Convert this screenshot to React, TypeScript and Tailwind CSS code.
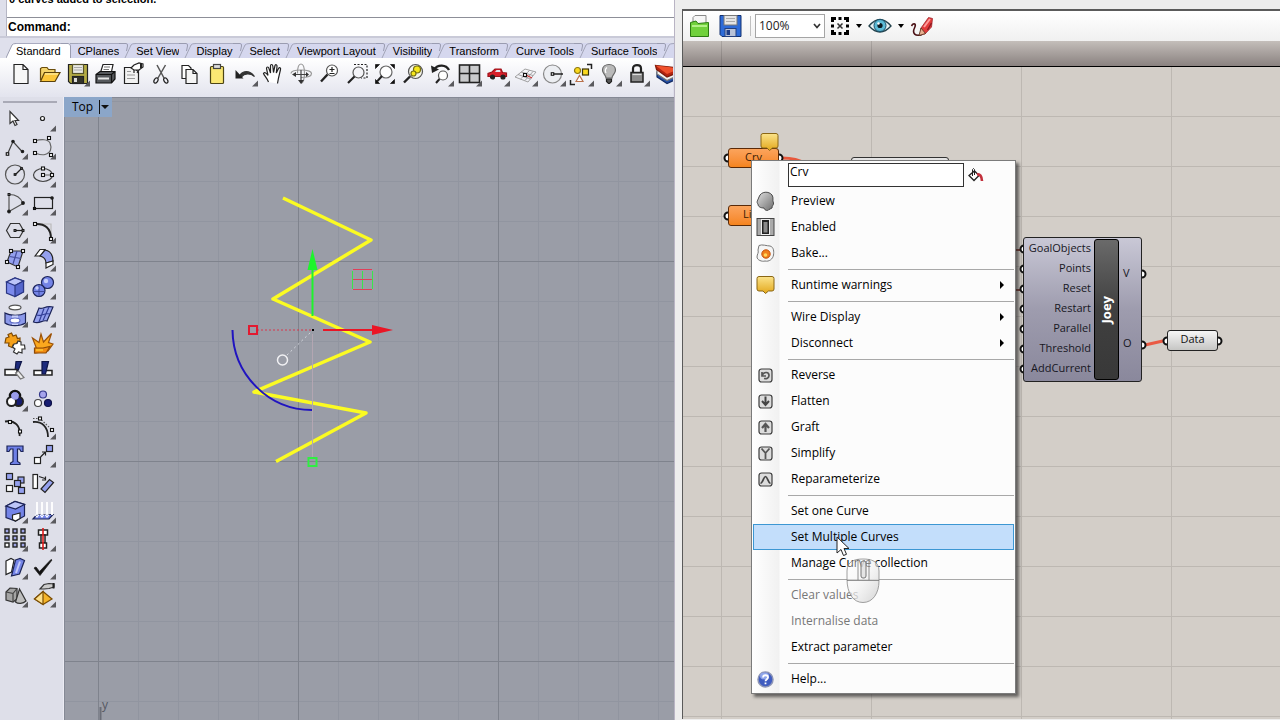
import React from "react";

type Glyph = { name: string; art: React.ReactNode; more?: boolean };

const sq = (x: number, y: number, s = 3) => (
  <rect x={x - s / 2} y={y - s / 2} width={s} height={s} fill="#fff" stroke="#111" strokeWidth="1.1" />
);

function Cell({ glyph }: { glyph: Glyph }) {
  return (
    <button type="button" aria-label={glyph.name} className="size-7 shrink-0">
      <svg viewBox="0 0 28 28" className="size-7" fill="none" stroke="#222" strokeWidth="1.2">
        {glyph.art}
        {glyph.more && <path d="M27 20.5V26.5H21Z" fill="#5a5a5e" stroke="none" />}
      </svg>
    </button>
  );
}

const toolbar: Glyph[] = [
  { name: "New", art: <path d="M7 4.500H16L21 9.500V23.500H7Z M16 4.500V9.500H21" fill="#f7f7f7" /> },
  {
    name: "Open",
    art: (
      <>
        <path d="M5.500 20V8.500L7 7.500H12L13.500 9.500H20V13" fill="#f3d36a" stroke="#6a4d0c" />
        <path d="M5.500 21.500L9.500 12.500H25L20 21.500Z" fill="#fbc63a" stroke="#5a420c" />
        <path d="M10 14H23" stroke="#fff0a8" />
      </>
    ),
  },
  {
    name: "Save",
    more: true,
    art: (
      <>
        <path d="M5.500 4.500H24.500V23.500H7.500L5.500 21.500Z" fill="#b5ac45" />
        <rect x="9.500" y="4.500" width="11" height="9" fill="#e9e9e4" stroke="#57542a" />
        <path d="M11 7.500H19M11 10H19" stroke="#aaa" />
        <rect x="9.500" y="16.500" width="11" height="7" fill="#33332a" />
        <rect x="11" y="18" width="3" height="4" fill="#ddd" stroke="none" />
      </>
    ),
  },
  {
    name: "Print",
    art: (
      <>
        <path d="M9 14L12 4.500H22L20 14Z" fill="#fff" />
        <path d="M13 7H19M12.500 9.500H18" stroke="#777" />
        <path d="M5 14.500L9 11.500H24V19L20.500 23H5Z" fill="#55585c" stroke="#111" />
        <path d="M5 14.500H20.500L24 11.500M20.500 14.500V23" stroke="#111" />
        <path d="M7 18.500H18" stroke="#e8e8e8" strokeWidth="2" />
      </>
    ),
  },
  {
    name: "Document properties",
    art: (
      <>
        <path d="M5.500 7.500H15L19.500 12V23.500H5.500Z" fill="#f2f2f2" />
        <path d="M8 11.500H12M8 15H16M8 18.500H16" stroke="#999" />
        <path d="M12 8L15 5L20 3L24 4V7L20 10L15 10Z" fill="#fff" />
        <path d="M15 10V13M20 10L18 13" />
        <path d="M22 3V8" strokeWidth="2" />
      </>
    ),
  },
  {
    name: "Cut",
    art: (
      <>
        <path d="M10 5L17 18M18.500 5L11 18" stroke="#555" strokeWidth="1.500" />
        <ellipse cx="9" cy="20.500" rx="1.800" ry="2.800" transform="rotate(30 9 20.500)" />
        <ellipse cx="18.800" cy="20.500" rx="1.800" ry="2.800" transform="rotate(-30 18.800 20.500)" />
      </>
    ),
  },
  {
    name: "Copy",
    art: (
      <>
        <path d="M7 5.500H13.500L16 8V18.500H7Z" fill="#fff" />
        <path d="M11 9.500H18L22 13.500V23.500H11Z M18 9.500V13.500H22" fill="#f5f5f5" />
      </>
    ),
  },
  {
    name: "Paste",
    art: (
      <>
        <rect x="7.500" y="6.500" width="13" height="17" rx="1" fill="#fbe873" stroke="#4d4515" />
        <rect x="10.500" y="4.500" width="7" height="4" fill="#ddd" stroke="#444" />
      </>
    ),
  },
  {
    name: "Undo",
    more: true,
    art: (
      <>
        <path d="M9 15C12 11 18 9.500 23.500 16.500C19 12.500 13 13.500 10.500 17Z" fill="#333" stroke="#333" />
        <path d="M4.500 10V18.500H12.500Z" fill="#222" stroke="none" />
      </>
    ),
  },
  {
    name: "Pan",
    art: (
      <path
        d="M9.500 22C8 18 5.500 16 4.500 13.500C5 12 7 12.500 9 15.500L7.500 8.500C7.500 6.500 9.500 6.500 10 8.500L11.500 13L11.500 6C11.500 4 13.500 4 13.800 6L14.500 12.500L16 5.500C16.500 4 18.300 4.500 18 6.500L17.300 13L19.500 8.500C20.500 7 22 8 21.500 9.500L19.500 18L18.500 23.500"
        fill="#fff"
      />
    ),
  },
  {
    name: "Rotate view",
    art: (
      <>
        <path d="M14 4C16 4 17.500 8 17.500 13.500S16 23.500 14 23.500" stroke="#999" />
        <path d="M14 4C12 4 10.500 8 10.500 13.500" stroke="#999" />
        <path d="M4 13.500C4 11 8 10 14 10S24.500 11 24.500 13.500S20 17.500 14 17.500" stroke="#999" />
        <path d="M14 10V20M9 14.500H19" stroke="#444" />
        <path d="M11 20H17L14 24Z M9 12V17L5 14.500Z M19 12V17L22 14.500Z" fill="#333" stroke="none" />
      </>
    ),
  },
  {
    name: "Zoom dynamic",
    art: (
      <>
        <circle cx="17" cy="10.500" r="5.500" fill="#fff" stroke="#555" />
        <path d="M12.500 14.500L6 21.500" strokeWidth="2.400" />
        <path d="M14.500 9.500H19.500M17 7V12M14.500 13.500H19.500" />
      </>
    ),
  },
  {
    name: "Zoom window",
    art: (
      <>
        <path d="M11 4.500H24V18H18" strokeDasharray="2 1.500" />
        <circle cx="15.500" cy="12.500" r="5.500" fill="#f4f4f8" stroke="#555" />
        <path d="M11.500 16.500L5 23" strokeWidth="2.200" />
      </>
    ),
  },
  {
    name: "Zoom extents",
    art: (
      <>
        <path d="M4.500 8.500V4.500H8.500Z M19.500 4.500H23.500V8.500Z M23.500 19.500V23.500H19.500Z M8.500 23.500H4.500V19.500Z" fill="#111" strokeWidth="0.800" />
        <circle cx="15" cy="12" r="6" fill="#fff" stroke="#666" />
        <path d="M11 16L6 21.500" strokeWidth="2" />
      </>
    ),
  },
  {
    name: "Zoom selected",
    art: (
      <>
        <circle cx="16.500" cy="11.500" r="7" fill="#f4f4e8" stroke="#555" />
        <circle cx="18" cy="9.500" r="3.500" fill="#f6e71c" stroke="#77700e" />
        <circle cx="14.500" cy="13.500" r="2.500" fill="#f6e71c" stroke="#77700e" />
        <path d="M11 16.500L5 22.500" strokeWidth="2.400" />
      </>
    ),
  },
  {
    name: "Undo view",
    more: true,
    art: (
      <>
        <path d="M7 9.500C11 4 19 4.500 22 10" strokeWidth="2.400" />
        <path d="M4 5.500L5 13L12 9.500Z" fill="#222" stroke="none" />
        <circle cx="16" cy="15.500" r="4.500" fill="#fff" stroke="#555" />
        <path d="M12.500 19L9 23" strokeWidth="2" />
      </>
    ),
  },
  {
    name: "Four viewports",
    more: true,
    art: (
      <>
        <rect x="4.500" y="5" width="20" height="17.500" fill="#c9cacc" strokeWidth="1.600" />
        <path d="M14.500 5V22.500M4.500 13.500H24.500" strokeWidth="1.600" />
      </>
    ),
  },
  {
    name: "Named view",
    more: true,
    art: (
      <>
        <path d="M5 16V13.500L9 12L12 9H18L19.500 12.500L23.500 13V16.500H5Z" fill="#d8202b" stroke="#9c1219" />
        <path d="M12 12L13.500 10H17L17.500 12Z" fill="#dfe6ee" stroke="none" />
        <circle cx="9.500" cy="17" r="2" fill="#222" />
        <circle cx="20" cy="17" r="2" fill="#222" />
      </>
    ),
  },
  {
    name: "Construction plane",
    more: true,
    art: (
      <>
        <path
          d="M4 17L14 9L25 12L17 22Z M7 14.500L19.500 19M10 12L22 15.500M9.500 19L18.500 10.500M14 20.500L22 11.500"
          stroke="#999"
          strokeWidth="0.900"
        />
        <path d="M15 15L21 18" stroke="#c33" />
        {sq(14, 15)}
      </>
    ),
  },
  {
    name: "Set object display",
    more: true,
    art: (
      <>
        <circle cx="13.500" cy="14" r="9" fill="#eceef2" stroke="#888" />
        <path d="M13.500 14H24" strokeWidth="1.500" />
        {sq(13.5, 14, 2.5)}
      </>
    ),
  },
  {
    name: "Select",
    more: true,
    art: (
      <>
        <path d="M20 4.500H24.500V9M3.500 20V24.500H8" strokeWidth="1.500" />
        <circle cx="10.500" cy="10.500" r="3" fill="#fbd91e" stroke="#8e7910" />
        <rect x="15.500" y="9" width="6" height="6" fill="#fbd91e" stroke="#3c3408" />
        <path d="M9 21.500L12.500 15.500L16 21.500Z" fill="#fff" stroke="#b9714b" />
      </>
    ),
  },
  {
    name: "Hide",
    more: true,
    art: (
      <>
        <path d="M11 18C11 14.500 7.500 14 7.500 10C7.500 6.500 10.500 4.500 14 4.500S20.500 6.500 20.500 10C20.500 14 17 14.500 17 18Z" fill="#b9b9b9" stroke="#666" />
        <path d="M12 7.500C10 9 10 11 11 13" stroke="#fff" />
        <path d="M11.500 19H16.500V21.500L14.500 23.500H13.500L11.500 21.500Z" fill="#555" />
      </>
    ),
  },
  {
    name: "Lock",
    more: true,
    art: (
      <>
        <path d="M10 13V8.500C10 4 18 4 18 8.500V13" strokeWidth="2.200" />
        <rect x="8" y="12.500" width="12" height="9.500" fill="#8b8b8b" strokeWidth="1.500" />
        <path d="M9.500 14.500H18.500" stroke="#ddd" />
      </>
    ),
  },
  {
    name: "Layers",
    art: (
      <>
        <path d="M6 12V17L16 23.500L28 18V12Z" fill="#2450a8" stroke="#122b63" />
        <path d="M6 10V14L16 20.500L28 15V10Z" fill="#f4f4f4" stroke="#777" />
        <path d="M4.500 5.500L5.500 9.500L16 17L28 12V8Z" fill="#b52410" stroke="#7b1a0a" />
        <path d="M4.500 5.500L18 7L28 9L16 14Z" fill="#f0502c" stroke="none" />
      </>
    ),
  },
];

const BLUE = "#94a0ee";

const sidebar: Glyph[] = [
  { name: "Pointer", art: <path d="M9 6.500V18.500L12 16L14 20.500L16 19.500L14 15.500H17.500Z" fill="#fff" stroke="#333" /> },
  { name: "Point", more: true, art: <circle cx="13.500" cy="13.500" r="2" fill="#fff" /> },
  {
    name: "Polyline",
    more: true,
    art: (
      <>
        <path d="M6.500 21L12 8.500L21.500 19" stroke="#444" />
        {sq(6.5, 21, 2.5)}
        <circle cx="12" cy="8.500" r="1.200" fill="#111" />
        <circle cx="21.500" cy="18.500" r="1.200" fill="#111" />
      </>
    ),
  },
  {
    name: "Curve",
    more: true,
    art: (
      <>
        <path d="M6 8C12 6 19 6 21 10C23 15 22 20 16 21.500C12 22.500 9 21 6 20" stroke="#666" />
        {sq(6, 8)}
        {sq(20, 5)}
        {sq(6, 20)}
        {sq(22, 22)}
      </>
    ),
  },
  {
    name: "Circle",
    more: true,
    art: (
      <>
        <circle cx="14" cy="13.500" r="9.500" stroke="#555" />
        <path d="M14 14L20.500 7.500" />
        {sq(14, 13.5, 1.6)}
        {sq(20.5, 7.5, 1.6)}
      </>
    ),
  },
  {
    name: "Ellipse",
    more: true,
    art: (
      <>
        <ellipse cx="14" cy="14" rx="9.500" ry="6.500" stroke="#444" />
        <path d="M14 14H23" stroke="#777" />
        {sq(14, 7.5)}
        {sq(14, 14)}
        {sq(23, 14)}
      </>
    ),
  },
  {
    name: "Arc",
    more: true,
    art: (
      <>
        <path d="M8 5.500C15 5.500 20 9 22 14.500L8 22.500Z" stroke="#555" />
        <circle cx="22" cy="14" r="1.300" fill="#111" />
        <circle cx="8" cy="22.500" r="1.300" fill="#111" />
        {sq(8, 5.5, 1.8)}
      </>
    ),
  },
  {
    name: "Rectangle",
    more: true,
    art: (
      <>
        <rect x="5.500" y="8.500" width="18" height="11" />
        <circle cx="23" cy="9" r="1.200" fill="#111" />
        {sq(5.5, 19.5, 2)}
      </>
    ),
  },
  {
    name: "Polygon",
    more: true,
    art: (
      <>
        <path d="M5.500 13.500L9.500 6.500H18.500L22.500 13.500L18.500 20.500H9.500Z" stroke="#333" />
        <path d="M14 13.500H22" />
        {sq(14, 13.5, 1.8)}
        {sq(22, 13.5, 1.8)}
      </>
    ),
  },
  {
    name: "Fillet curves",
    more: true,
    art: (
      <>
        <path d="M6 7H22V22" stroke="#bbb" />
        <path d="M6 7C16 6.500 22 11 22 22" strokeWidth="2" />
        {sq(6, 7)}
        {sq(22, 22)}
      </>
    ),
  },
  {
    name: "Surface from points",
    more: true,
    art: (
      <>
        <path d="M10 6H22L17 22L6 17Z" fill={BLUE} stroke="#333" />
        <path d="M16 6L12 19M8.500 11.500L20 13.500" stroke="#444c99" />
        {sq(10, 6)}
        {sq(22, 6)}
        {sq(17, 22)}
        {sq(6, 17)}
      </>
    ),
  },
  {
    name: "Fillet surface",
    more: true,
    art: (
      <>
        <path d="M6 11L11 4.500H16L12 11Z" fill="#fff" />
        <path d="M11 11L16 5C21 6 24 10 24 16L17 18C17 14.500 15 12 11 11Z" fill={BLUE} />
        <path d="M17 18L24 16V19.500L17 23Z" fill="#fff" />
      </>
    ),
  },
  {
    name: "Box",
    more: true,
    art: (
      <>
        <path d="M5.500 9L14 5L22.500 8V19L14 23.500L5.500 20Z" fill="#7b8aec" stroke="#2b3784" />
        <path d="M5.500 9L14 12.500L22.500 8L14 5Z" fill="#bcc5f8" stroke="#2b3784" />
        <path d="M14 12.500V23.500L22.500 19V8Z" fill="#5667cc" stroke="#2b3784" />
      </>
    ),
  },
  {
    name: "Boolean union",
    more: true,
    art: (
      <>
        <circle cx="18.500" cy="9.500" r="6" fill="#7484e6" stroke="#1b2357" />
        <circle cx="10" cy="17.500" r="6" fill="#7484e6" stroke="#1b2357" />
        <circle cx="17" cy="8" r="2.200" fill="#c7cffb" stroke="none" />
        <path d="M10 11.500V23.500M4 18.500H16" stroke="#303c8c" strokeWidth="0.800" />
        <circle cx="8" cy="15" r="1.700" fill="#c7cffb" stroke="none" />
      </>
    ),
  },
  {
    name: "Extract isocurve",
    more: true,
    art: (
      <>
        <ellipse cx="14" cy="6.500" rx="6" ry="2.300" fill="#fff" stroke="#555" />
        <path d="M4 12C9 15 19 15 24.500 12V22C19 25.500 9 25.500 4 22Z" fill="#8c99ea" stroke="#1b2357" />
        <path d="M14 14.500V24" stroke="#c9d0fa" strokeWidth="6" />
        <ellipse cx="14" cy="19.500" rx="5" ry="2.500" fill="#fff" stroke="#5d6ac6" />
      </>
    ),
  },
  {
    name: "Rebuild surface",
    more: true,
    art: (
      <>
        <path d="M10 7C14 9 16 4 24 6L18 20C13 18.500 11 23.500 4.500 21Z" fill={BLUE} stroke="#1b2357" />
        <path d="M15 7.500L10 21M20 6L14 19.500M7.500 14C13 16 14 11.500 21 13" stroke="#34409a" />
      </>
    ),
  },
  {
    name: "Join",
    art: (
      <>
        <path
          d="M5 9L8 8L7 5.500L10.500 4L12 7L15 6L16.500 9.500L19 9V13L16 13.500V17L12 16L11 18.500L7.500 17L8 14L4 14Z"
          fill="#f5a11b"
          stroke="#7e4a05"
        />
        <path d="M13 15L16 14.500L17 12L20 13L20 16L23.500 16L24 20L21 20L21 24L17.500 23L16 25L12.500 23L14 20L11.500 18Z" fill="#fff" stroke="#333" />
      </>
    ),
  },
  {
    name: "Explode",
    art: (
      <>
        <path d="M3.500 9L10 13.500L12 5L14.500 13L22.500 4.500L19.500 13.500L24 15L19 22L6 24L7 18Z" fill="#fba81e" stroke="#9c5207" />
        <path d="M5.500 19H14L21 17.500L17 24H5.500Z" fill="#f08a12" stroke="#8c4a07" />
        <path d="M7 21H14" stroke="#ffd93b" />
      </>
    ),
  },
  {
    name: "Trim",
    art: (
      <>
        <path d="M15 4.500H20.500L17 14H14Z" fill="#1c2a7c" stroke="#0e1547" />
        <rect x="4" y="12.500" width="12" height="5.500" fill="#fff" strokeWidth="1.500" />
        <path d="M14.500 16L17.500 14L23 20.500L19.500 22Z" fill="#eee" stroke="#777" />
      </>
    ),
  },
  {
    name: "Split",
    art: (
      <>
        <rect x="5" y="13.500" width="18" height="4.500" fill="#fff" strokeWidth="1.500" />
        <path d="M13 4.500H19.500L16.500 17H13Z" fill="#1c2a7c" stroke="#0e1547" />
      </>
    ),
  },
  {
    name: "Group",
    more: true,
    art: (
      <>
        <circle cx="14" cy="11" r="5" stroke="#111" strokeWidth="2.500" fill={BLUE} />
        <circle cx="17.500" cy="16.500" r="4.500" fill="#171d72" strokeWidth="2" />
        <circle cx="10.500" cy="16.500" r="4.500" fill="#fff" strokeWidth="2" />
        <circle cx="14" cy="11" r="3.800" fill="#9a9cec" stroke="none" />
      </>
    ),
  },
  {
    name: "Ungroup",
    art: (
      <>
        <circle cx="14" cy="9.500" r="3.500" fill="#a6a4ec" stroke="#34388a" />
        <circle cx="9" cy="18" r="3.500" fill="#fff" stroke="#444" />
        <circle cx="19" cy="18" r="3.500" fill="#171d72" stroke="#0e1147" />
      </>
    ),
  },
  {
    name: "Edit points",
    art: (
      <>
        <path d="M4 8.500C14 7 20 13 18.500 23" strokeWidth="1.800" />
        {sq(9, 9)}
        {sq(19, 18.500)}
      </>
    ),
  },
  {
    name: "Control points",
    more: true,
    art: (
      <>
        <path d="M4 9C13 8 19 14 19 24" strokeWidth="1.800" />
        <path d="M4 5.500H11L22 16" stroke="#555" strokeDasharray="1.500 1.500" />
        {sq(11, 5.5)}
        {sq(23, 17)}
      </>
    ),
  },
  {
    name: "Annotation",
    art: <path d="M6 5H22V10.500H20L18.500 8H16.500V20.500L19 22V23.500H9.500V22L12 20.500V8H9.500L8 10.500H6Z" fill="#6f80e6" stroke="#1b2357" />,
  },
  {
    name: "Move",
    more: true,
    art: (
      <>
        <rect x="5.500" y="16.500" width="6" height="6" fill="#fff" />
        <rect x="17.500" y="4.500" width="6" height="6" fill={BLUE} />
        <path d="M11.500 16L16.500 11M13 11H16.500V14.500" />
      </>
    ),
  },
  {
    name: "Copy objects",
    art: (
      <>
        <rect x="5.500" y="4.500" width="6" height="6" fill={BLUE} />
        <rect x="17" y="8" width="6" height="6" fill={BLUE} />
        <rect x="13.500" y="11.500" width="6" height="6" fill={BLUE} />
        <rect x="5.500" y="16.500" width="6" height="6" fill="#fff" />
        <rect x="17.500" y="18.500" width="6" height="6" fill={BLUE} />
      </>
    ),
  },
  {
    name: "Rotate",
    art: (
      <>
        <rect x="4" y="5.500" width="4.500" height="14" fill="#fff" />
        <path d="M10 7.500L16 9.500M13 11H16.500V7.500" />
        <path d="M12 20L20.500 10.500L24.500 13.500L16 23.500Z" fill={BLUE} />
      </>
    ),
  },
  {
    name: "Solid edit",
    more: true,
    art: (
      <>
        <path d="M5 9L14 4.500L23.500 7.500V19L14.500 24L5 20.500Z" fill="#7484e6" stroke="#1b2357" />
        <path d="M5 9L14 4.500L23.500 7.500L14.500 12Z" fill="#bcc5f8" stroke="#1b2357" />
        <path d="M11.500 18L19 16V21.500L14.500 24L11.500 22.500Z" fill="#fff" stroke="#222" />
      </>
    ),
  },
  {
    name: "Project to plane",
    more: true,
    art: (
      <>
        <path d="M4 22L8 17.500H24L20 22Z" fill="#7484e6" stroke="#1b2357" />
        <path d="M8 5V18M13 5V18M18 5V18M23 5V18" stroke="#fff" strokeWidth="1.800" />
        <path d="M6 17.500L8 20L10 17.500M11 17.500L13 20L15 17.500M16 17.500L18 20L20 17.500" stroke="#fff" />
      </>
    ),
  },
  {
    name: "Array",
    more: true,
    art: (
      <>
        {[6, 14, 22].map((x) =>
          [6, 13, 20].map((y) => (
            <rect key={`${x}-${y}`} x={x - 2} y={y - 2} width="4" height="4" fill={x === 6 && y === 20 ? "#fff" : "#9fa5e6"} strokeWidth="1.400" />
          )),
        )}
      </>
    ),
  },
  {
    name: "Align",
    more: true,
    art: (
      <>
        <rect x="9.500" y="5" width="9" height="5" fill="#fff" strokeWidth="1.500" />
        <rect x="12" y="10" width="4" height="8" fill="#fff" strokeWidth="1.500" />
        <rect x="10.500" y="18" width="7" height="5" fill="#fff" strokeWidth="1.500" />
        <path d="M14 3V25" stroke="#e01b1b" strokeWidth="1.600" />
      </>
    ),
  },
  {
    name: "Offset surface",
    more: true,
    art: (
      <>
        <path d="M5 8L10 5.500L13 7L10.500 19L5 21.500Z" fill="#fff" />
        <path d="M14.500 7L19 5.500L23.500 7.500L18.500 21L10.500 23Z" fill="#7484e6" stroke="#1b2357" />
        <path d="M19 8.500L15 20" stroke="#c3cafa" strokeWidth="2" />
      </>
    ),
  },
  { name: "Check objects", more: true, art: <path d="M5 15L7 14L10.500 18.500L22 6.500L23 7L11 22.500Z" fill="#111" strokeWidth="0.800" /> },
  {
    name: "Mesh solids",
    more: true,
    art: (
      <>
        <path d="M5 11L9 7L16 7.500V18L12 21L5 19Z" fill="#a4a4a4" stroke="#333" />
        <path d="M5 11L12 12.500V21M12 12.500L16 7.500" stroke="#444" />
        <path d="M18.500 8L25 20C22 23 17 23 14.500 21Z" fill="#bdbdbd" stroke="#333" />
      </>
    ),
  },
  {
    name: "Render tools",
    more: true,
    art: (
      <>
        <path d="M11 8L15 3.500L20 2.500L25 3V6L20 7.500L15 8Z" fill="#ccc" stroke="#333" />
        <path d="M24.500 2V7.500" strokeWidth="2" />
        <path d="M14 10.500L23 18L14 23.500L5.500 18Z" fill="#f5b52a" stroke="#7b4d04" />
        <path d="M14 10.500L5.500 18L14 23.500Z" fill="#fde08c" stroke="#7b4d04" />
      </>
    ),
  },
];

const tabs = ["Standard", "CPlanes", "Set View", "Display", "Select", "Viewport Layout", "Visibility", "Transform", "Curve Tools", "Surface Tools"];

function RhinoViewport() {
  return (
    <main className="relative min-w-0 flex-1 overflow-hidden bg-[#9a9da7]">
      <svg className="absolute inset-0 size-full" fill="none">
        <defs>
          <pattern id="fine" x="34" y="4" width="40" height="40" patternUnits="userSpaceOnUse">
            <path d="M0.500 0V40M0 0.500H40" stroke="#9195a0" />
          </pattern>
          <pattern id="coarse" x="34" y="164" width="200" height="200" patternUnits="userSpaceOnUse">
            <path d="M0.500 0V200M0 0.500H200" stroke="#7f838d" />
          </pattern>
        </defs>
        <rect width="100%" height="100%" fill="url(#fine)" />
        <rect width="100%" height="100%" fill="url(#coarse)" />
        <path d="M0 0.500H2000M0.500 0V2000" stroke="#858995" />
        <path d="M36.500 610V624" stroke="#6a6d77" strokeWidth="2" />
        <path d="M219 101L307 143L209 202L306 245L190 295L302 316L212 364.500" stroke="#fbfb22" strokeWidth="3.500" strokeLinejoin="round" />
        <path d="M168.500 233C169 278 205 313 248 313" stroke="#2014c0" strokeWidth="2" />
        <path d="M193 233H247" stroke="#d8374d" strokeDasharray="2 2" />
        <path d="M248.500 237V360" stroke="#b3a6b2" />
        <path d="M223 258L247 235" stroke="#d5d8de" strokeDasharray="2 3" />
        <path d="M259 233H310" stroke="#ea1525" strokeWidth="2" />
        <path d="M308 228L329 233L308 238Z" fill="#ea1525" />
        <path d="M248.500 219V170" stroke="#1df52b" strokeWidth="2" />
        <path d="M243.500 173L248.500 152L253.500 173Z" fill="#1df52b" />
        <rect x="185" y="229" width="8" height="8" stroke="#e21a30" strokeWidth="2" />
        <rect x="244.500" y="361" width="8" height="8" stroke="#2fee42" strokeWidth="2" />
        <circle cx="218.500" cy="263" r="5" stroke="#f1f1f4" strokeWidth="1.500" />
        <rect x="248" y="232" width="2" height="2" fill="#000" />
        <path d="M288.500 174V192M298.500 174V192M308.500 174V192" stroke="#38e64b" />
        <path d="M289 172.500H308M289 182.500H308M289 192.500H308" stroke="#e0405a" />
      </svg>
      <button type="button" className="relative flex h-5 w-12 items-center bg-[#8ba6c9] pl-2 text-[12px] text-black [font-family:'Open_Sans',sans-serif]">
        Top
        <svg viewBox="0 0 12 14" className="ml-1.5 h-3.5 w-3 shrink-0">
          <path d="M0.500 0V14" stroke="#111" />
          <path d="M2 5H10L6 9Z" fill="#111" />
        </svg>
      </button>
      <span className="absolute top-[600px] left-[38px] text-[12px] leading-4 text-[#555862] [font-family:'Open_Sans',sans-serif]">y</span>
    </main>
  );
}

function RhinoWindow() {
  return (
    <section className="flex min-w-0 flex-col overflow-hidden bg-[#dedfea] [font-family:'Liberation_Sans',Arial,sans-serif]">
      <div className="ml-1.5 border-l border-[#b5b6c4] bg-white">
        <div className="flex h-[18px] items-start overflow-hidden border-b border-[#8d8f98]">
          <p className="-mt-2 pl-0.5 text-[11px] leading-[14px] font-bold text-black">0 curves added to selection.</p>
        </div>
        <label className="flex h-[18px] items-center pl-px text-[12px] font-bold text-black">
          Command:
          <input className="ml-1 min-w-0 flex-1 font-normal outline-none" />
        </label>
      </div>
      <div className="flex h-[22px] shrink-0 items-end overflow-hidden border-t-2 border-[#c9cad8] bg-[#dfe0ec] pl-1.5">
        {tabs.map((tab, i) => (
          <div key={tab} className="flex h-[15px] shrink-0 items-stretch">
            {i === 0 && (
              <svg viewBox="0 0 10 15" className="h-[15px] w-2.5">
                <path d="M0 15L6 2Q7 0 10 0.500V15Z" fill="#fff" />
                <path d="M0 15L6 2Q7 0.500 10 0.500" fill="none" stroke="#9a9cb0" />
              </svg>
            )}
            <button
              type="button"
              className={`border-t border-[#a9abc0] text-[11px] leading-[14px] whitespace-nowrap text-black ${i === 0 ? "bg-white" : "bg-[#d5d7ee]"}`}
            >
              {tab}
            </button>
            <svg viewBox="0 0 17 15" className="h-[15px] w-[17px]">
              <path d="M0 0H17V15H0Z" fill="#d5d7ee" />
              <path d={i === 0 ? "M0 0H7Q9 0 9 2V15H0Z" : "M0 0H7L9 3V15H0Z"} fill={i === 0 ? "#fff" : "#d5d7ee"} />
              <path d={i === 0 ? "M0 0.500H7Q9 0.500 9.500 3V15" : "M0 0.500H7Q9 0.500 8.500 3L7.500 8"} fill="none" stroke="#9a9cb0" />
              {i > 0 && <path d="M6 15L12 2Q13 0.500 17 0.500" fill="none" stroke="#a3a5b8" />}
              {i === 0 && <path d="M9 0.500H17" stroke="#a3a5b8" />}
            </svg>
          </div>
        ))}
        <div className="h-[15px] flex-1 bg-[#d5d7ee]" />
      </div>
      <div className="mr-px flex h-[39px] shrink-0 overflow-hidden bg-linear-to-b from-white to-[#e3e4ee] pt-0.5 pl-[7px]">
        {toolbar.map((g) => (
          <Cell key={g.name} glyph={g} />
        ))}
      </div>
      <div className="flex min-h-0 flex-1 overflow-hidden">
        <nav className="w-16 shrink-0 overflow-hidden border-r border-[#ececf4] bg-[#dedfe9] pt-1 pl-px">
          <div className="mr-1.5 mb-0.5 ml-0.5 h-0.5 bg-[#a9aab6]" />
          <div className="grid w-14 grid-cols-2">
            {sidebar.map((g) => (
              <Cell key={g.name} glyph={g} />
            ))}
          </div>
        </nav>
        <RhinoViewport />
      </div>
    </section>
  );
}

const badge = (d: React.ReactNode) => (
  <>
    <rect x="4" y="4" width="13" height="13" rx="2.500" fill="#dcdcdc" stroke="#3c3c3c" strokeWidth="1.200" />
    {d}
  </>
);

type Entry = { label: string; icon?: React.ReactNode; sub?: boolean; active?: boolean; disabled?: boolean };

const balloon = (
  <path d="M4 1.500H17Q19 1.500 19 3.500V14Q19 16 17 16H13.500L10.500 18.500L8 16H4Q2 16 2 14V3.500Q2 1.500 4 1.500Z" fill="url(#gold)" stroke="#8a6614" />
);

const groups: Entry[][] = [
  [
    {
      label: "Preview",
      icon: (
        <path d="M4 6C6 0 14 0 17 4C19 7 17 9 18.500 12C19 14 17 14 17 17L14 18.500C13 20 10 20 9 17C6 17 3 16 3 13C1 11 3 9 4 6Z" fill="url(#steel)" stroke="#4a4a4a" />
      ),
    },
    {
      label: "Enabled",
      icon: (
        <>
          <rect x="2" y="1.500" width="17" height="17" fill="#a9a9a9" stroke="#444" />
          <rect x="6.500" y="2.500" width="8" height="15" fill="#222" stroke="#eee" />
          <rect x="8.500" y="5" width="4" height="10.500" fill="#8a8a8a" />
        </>
      ),
    },
    {
      label: "Bake...",
      icon: (
        <>
          <path d="M4 2.500C7 1 12 3 15 3C19 4 19 9 18.500 12C18 16 14 19 10 18C7 19 2 17 2 14C2 11 4 10 3 7Z" fill="#f5f5f5" stroke="#777" />
          <circle cx="11" cy="11" r="4.200" fill="#f07f1c" stroke="#c4520b" />
          <circle cx="10.500" cy="12" r="1.800" fill="#ffd75a" />
        </>
      ),
    },
  ],
  [{ label: "Runtime warnings", icon: balloon, sub: true }],
  [
    { label: "Wire Display", sub: true },
    { label: "Disconnect", sub: true },
  ],
  [
    { label: "Reverse", icon: badge(<path d="M7 7V11H11M7 10.500C9 6 14 7 14 10.500C14 13 11.500 14 9 13.500" fill="none" stroke="#555" strokeWidth="1.700" />) },
    { label: "Flatten", icon: badge(<path d="M10.500 5.500V13M7 10L10.500 14L14 10" fill="none" stroke="#444" strokeWidth="2" />) },
    { label: "Graft", icon: badge(<path d="M10.500 15V8M7 11L10.500 7L14 11" fill="none" stroke="#555" strokeWidth="2.200" />) },
    { label: "Simplify", icon: badge(<path d="M6.500 5.500L10.500 10L14.500 5.500M10.500 10V16" fill="none" stroke="#555" strokeWidth="1.800" />) },
    { label: "Reparameterize", icon: badge(<path d="M5.500 14.500C8 14 8.500 7.500 10.500 7.500S13 14 15.500 14.500" fill="none" stroke="#444" strokeWidth="1.700" />) },
  ],
  [{ label: "Set one Curve" }, { label: "Set Multiple Curves", active: true }, { label: "Manage Curve collection" }],
  [{ label: "Clear values", disabled: true }, { label: "Internalise data", disabled: true }, { label: "Extract parameter" }],
  [
    {
      label: "Help...",
      icon: (
        <>
          <circle cx="10.500" cy="10.500" r="7.500" fill="#3f5cc0" stroke="#8d95b5" strokeWidth="1.500" />
          <ellipse cx="9.500" cy="7" rx="4.500" ry="3.500" fill="#8fa5ea" />
          <path d="M8 8.500C8 5.500 13 5.500 13 8.500C13 10 10.500 10.500 10.500 12.300M10.500 13.600V15.200" fill="none" stroke="#fff" strokeWidth="1.800" />
        </>
      ),
    },
  ],
];

function ContextMenu() {
  return (
    <div className="absolute top-[93px] left-[68px] w-[265px] border border-[#7b7b7b] bg-[linear-gradient(90deg,#ffffff_0px,#f1f1f1_27px,#fcfcfc_28px)] p-px shadow-[3px_3px_3px_rgba(40,40,40,0.65)]">
      <div className="flex h-[26px] items-center pl-[35px]">
        <input
          aria-label="Name"
          defaultValue="Crv"
          className="h-6 w-44 border border-[#333] bg-white px-px pb-2 text-[12px] leading-4 text-black outline-none"
        />
        <svg viewBox="0 0 16 16" className="ml-1 size-4">
          <path d="M1 8.500L6.500 4L11 8.500L6 13.500Z" fill="#fff" stroke="#222" strokeWidth="1.300" />
          <path d="M4.500 9V2.500Q5.500 0.500 6.500 2.500V8" fill="none" stroke="#222" />
          <path d="M9 7.500Q13.500 6.500 14 14" fill="none" stroke="#c3303c" strokeWidth="2.600" />
        </svg>
      </div>
      {groups.map((group, gi) => (
        <div key={gi}>
          {gi > 0 && <hr className="mt-[3px] mb-[2px] ml-[35px] border-t border-[#a8a8a8]" />}
          {group.map((item) => (
            <button
              type="button"
              key={item.label}
              disabled={item.disabled}
              className={`flex h-[26px] w-full items-center border text-left text-[12px] whitespace-nowrap ${
                item.active ? "border-[#3c97d3] bg-[#c3defb]" : "border-transparent"
              } ${item.disabled ? "text-[#777]" : "text-black"}`}
            >
              <svg viewBox="0 0 21 21" className="ml-px size-[21px] shrink-0">
                {item.icon}
              </svg>
              <span className="ml-[15px] flex-1">{item.label}</span>
              {item.sub && (
                <svg viewBox="0 0 6 10" className="mr-2 h-2.5 w-1.5">
                  <path d="M1 1L5 5L1 9Z" fill="#000" />
                </svg>
              )}
            </button>
          ))}
        </div>
      ))}
    </div>
  );
}

const inputs = ["GoalObjects", "Points", "Reset", "Restart", "Parallel", "Threshold", "AddCurrent"];

function Canvas() {
  return (
    <div className="relative min-h-0 flex-1 overflow-hidden bg-[#d3cec8]">
      <svg className="absolute inset-0 size-full" fill="none">
        <defs>
          <pattern id="cols" x="38" y="49" width="150" height="50" patternUnits="userSpaceOnUse">
            <path d="M0.500 0V50M0 0.500H150" stroke="#bdb8b2" />
          </pattern>
          <linearGradient id="gold" x1="0" y1="0" x2="0" y2="1">
            <stop offset="0" stopColor="#fbe38a" />
            <stop offset="1" stopColor="#e3a81c" />
          </linearGradient>
          <linearGradient id="steel" x1="0" y1="0" x2="1" y2="1">
            <stop offset="0" stopColor="#e0e0e0" />
            <stop offset="1" stopColor="#6d6d6d" />
          </linearGradient>
        </defs>
        <rect width="100%" height="100%" fill="url(#cols)" />
        <path d="M99 91C110 91 115 93 125 97" stroke="#e8583c" strokeWidth="3" />
        <path d="M462 278L482 273.500" stroke="#ea5a44" strokeWidth="3" />
        <path d="M330 183H338M330 223H338" stroke="#7d3b33" strokeWidth="2" />
        <g fill="#fff" stroke="#111" strokeWidth="2">
          <circle cx="45" cy="91" r="3.500" />
          <circle cx="96" cy="91" r="3.500" />
          <circle cx="45" cy="149" r="3.500" />
          {inputs.map((name, i) => (
            <circle key={name} cx="341" cy={182 + i * 20} r="3.500" />
          ))}
          <circle cx="459" cy="207" r="3.500" />
          <circle cx="459" cy="278" r="3.500" />
          <circle cx="484" cy="274" r="3.500" />
          <circle cx="535" cy="274" r="3.500" />
        </g>
      </svg>

      <div className="absolute top-[81px] left-[45px] flex h-5 w-[51px] items-center justify-center rounded-[3px] border border-[#5a2a08] bg-linear-to-b from-[#fba45c] to-[#f5841c] pb-0.5 text-[11px] text-[#3a1c05]">
        Crv
      </div>
      <div className="absolute top-[138px] left-[45px] flex h-[21px] w-[51px] items-center rounded-[3px] border border-[#5a2a08] bg-linear-to-b from-[#fba45c] to-[#f5841c] pb-0.5 pl-3.5 text-[11px] text-[#3a1c05]">
        Line
      </div>
      <svg viewBox="0 0 21 19" className="absolute top-[65px] left-[76px] h-[19px] w-[21px]">
        {balloon}
      </svg>
      <div className="absolute top-[90px] left-[168px] h-5 w-[98px] rounded-[3px] border border-[#333] bg-[#e4e4e4]" />

      <div className="absolute top-[170px] left-[340px] flex h-[145px] w-[119px] rounded-[3px] border border-[#222] bg-linear-to-b from-[#c9c8d6] via-[#9e9cae] to-[#8a889c] text-[11px] text-[#17171f]">
        <ul className="w-[70px] pr-[3px] text-right">
          {inputs.map((name) => (
            <li key={name} className="h-5 leading-5">
              {name}
            </li>
          ))}
        </ul>
        <div className="my-px flex w-[25px] items-center justify-center rounded-[3px] border border-black bg-linear-to-b from-[#6a6a6a] via-[#404040] to-[#383838]">
          <span className="rotate-180 text-[13px] font-bold text-white [writing-mode:vertical-rl]">Joey</span>
        </div>
        <ul className="flex flex-1 flex-col pl-1 leading-[70px]">
          <li>V</li>
          <li>O</li>
        </ul>
      </div>
      <div className="absolute top-[263px] left-[484px] flex h-[21px] w-[51px] items-center justify-center rounded-[3px] border border-[#222] bg-linear-to-b from-[#f6f6f6] to-[#c6c6c4] pb-0.5 text-[11px] text-[#111]">
        Data
      </div>

      <ContextMenu />

      <svg viewBox="0 0 52 72" className="pointer-events-none absolute top-[468px] left-[150px] h-[72px] w-[52px]">
        <defs>
          <linearGradient id="shell" x1="0" y1="0" x2="1" y2="1">
            <stop offset="0" stopColor="#fff" stopOpacity="0.300" />
            <stop offset="0.450" stopColor="#f4f4f4" stopOpacity="0.600" />
            <stop offset="1" stopColor="#d2d2d2" />
          </linearGradient>
        </defs>
        <path d="M14 44V36C14 26 22 24 30 24S46 26 46 36V46C46 58 40 67.500 30 67.500S14 58 14 44Z" fill="url(#shell)" stroke="#888" strokeWidth="0.800" />
        <path d="M14 45.500H46M25 24V45M36 24V45" stroke="#777" strokeWidth="0.800" />
        <rect x="28" y="26" width="5" height="17" rx="2" fill="#ddd" fillOpacity="0.700" stroke="#777" />
        <path d="M4 2V18L8 14.500L10.500 20.500L13.500 19.300L11 13.500H16Z" fill="#fff" stroke="#222" />
      </svg>
    </div>
  );
}

const Caret = () => (
  <svg viewBox="0 0 6 4" className="h-1 w-1.5 shrink-0">
    <path d="M0 0H6L3 4Z" fill="#000" />
  </svg>
);

function GrasshopperWindow() {
  return (
    <section className="flex min-w-0 flex-col border-l border-[#b9b4c4] bg-[#ededed] pb-px pl-[7px] text-[12px] [font-family:'Open_Sans','Noto_Sans',sans-serif]">
      <div className="h-[9px] shrink-0" />
      <div className="flex min-h-0 flex-1 flex-col overflow-hidden border-t-2 border-l border-[#5a5a5a]">
        <header className="flex h-[30px] shrink-0 items-center bg-linear-to-b from-white to-[#f0f0f0] pl-1.5">
          <button type="button" aria-label="Open file">
            <svg viewBox="0 0 22 24" className="h-6 w-[22px]">
              <path d="M4 13V3.500L6 1.500H17V13" fill="#f6f6f6" stroke="#888" />
              <path d="M1.500 8.500L7 7L9 9.500L19.500 8.500V22.500H1.500Z" fill="#71d13c" stroke="#2c7a12" />
              <path d="M3 12H18" stroke="#b3f088" strokeWidth="2" />
            </svg>
          </button>
          <button type="button" aria-label="Save file" className="ml-2">
            <svg viewBox="0 0 23 24" className="h-6 w-[23px]">
              <path d="M1 1.500H22V22.500H3L1 20.500Z" fill="#2d6bd8" stroke="#12306f" />
              <rect x="5" y="1.500" width="13" height="9.500" fill="#e5e5e5" stroke="#777" />
              <path d="M7 4.500H16M7 7.500H16" stroke="#aaa" />
              <rect x="6" y="14.500" width="11" height="8" fill="#b8c2d8" stroke="#24407e" />
              <rect x="7.500" y="16" width="3.500" height="5" fill="#1d3c86" />
            </svg>
          </button>
          <div className="ml-2 h-5 w-px bg-[#c0c0c0]" />
          <div className="relative ml-1">
            <select aria-label="Zoom level" defaultValue="100%" className="block h-6 w-[70px] appearance-none border border-[#a5a5a5] bg-white pl-[3px] text-[12px] text-[#222]">
              <option>50%</option>
              <option>100%</option>
              <option>200%</option>
            </select>
            <svg viewBox="0 0 8 6" className="pointer-events-none absolute top-[9px] right-1 h-1.5 w-2">
              <path d="M1 1L4 4.500L7 1" fill="none" stroke="#333" strokeWidth="1.700" />
            </svg>
          </div>
          <button type="button" aria-label="Zoom extents" className="ml-[5px] flex items-center gap-1.5">
            <svg viewBox="0 0 20 20" className="size-5">
              <path
                d="M2.500 6V2.500H6M14 2.500H17.500V6M17.500 14V17.500H14M6 17.500H2.500V14M2.500 8.500V11.500M17.500 8.500V11.500M8.500 2.500H11.500M8.500 17.500H11.500"
                fill="none"
                stroke="#000"
                strokeWidth="3"
              />
              <path d="M7.500 7.500L12.500 12.500M12.500 7.500L7.500 12.500" stroke="#333" strokeWidth="1.500" />
            </svg>
            <Caret />
          </button>
          <button type="button" aria-label="Preview settings" className="ml-1.5 flex items-center gap-1.5">
            <svg viewBox="0 0 24 18" className="h-[18px] w-6">
              <path d="M1 9Q12 -4 23 9Q12 21 1 9Z" fill="#e8f2f4" stroke="#23424c" strokeWidth="1.300" />
              <circle cx="12" cy="8.500" r="6" fill="#5cbbd6" stroke="#17506a" />
              <circle cx="12" cy="8.500" r="2.600" fill="#0b1a22" />
              <circle cx="10.500" cy="6.500" r="1.200" fill="#fff" />
            </svg>
            <Caret />
          </button>
          <button type="button" aria-label="Sketch" className="ml-1.5">
            <svg viewBox="0 0 24 24" className="size-6">
              <path d="M1.500 12C4 8 6.500 10 4.500 14C2 19 5 23 12 20.500" fill="none" stroke="#4b1216" strokeWidth="1.600" />
              <path d="M11 14L18.500 3.500L22.500 4.500L21.500 13L15 20L10 20.500Z" fill="#e23a3a" stroke="#a0242b" strokeWidth="0.800" />
              <path d="M11 14L15.500 19.500L9 21.500Z" fill="#e8b090" stroke="#55301a" strokeWidth="0.800" />
              <path d="M14 13L20 5" stroke="#ff9a9a" strokeWidth="2" />
              <path d="M17.500 16L21.500 9" stroke="#8c1b22" strokeWidth="1.500" />
            </svg>
          </button>
        </header>
        <div className="h-[26px] shrink-0 border-b border-black bg-linear-to-b from-[#c4beba] to-[#8a8280]">
          <svg className="block size-full">
            <path d="M38.500 0V26M188.500 0V26" stroke="#000" strokeOpacity="0.120" />
          </svg>
        </div>
        <Canvas />
      </div>
    </section>
  );
}

export default function App() {
  return (
    <div className="grid h-screen grid-cols-[674fr_606fr] grid-rows-[minmax(0,1fr)] overflow-hidden">
      <RhinoWindow />
      <GrasshopperWindow />
    </div>
  );
}
